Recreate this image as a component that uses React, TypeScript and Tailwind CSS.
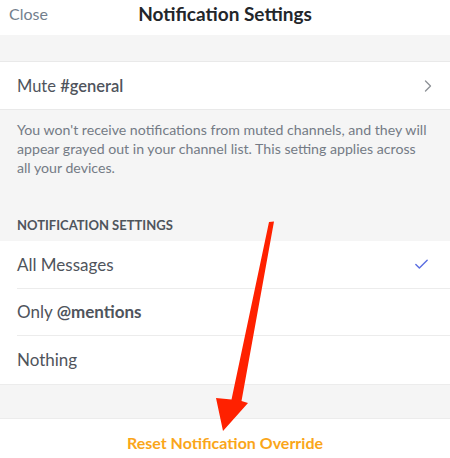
import { ChevronRight, Check } from "lucide-react";

const font = { fontFamily: "Lato, 'Open Sans', sans-serif" };

type Option = { id: string; label: React.ReactNode; selected?: boolean };

const options: Option[] = [
  { id: "all", label: "All Messages", selected: true },
  {
    id: "mentions",
    label: (
      <>
        Only <span className="font-bold">@mentions</span>
      </>
    ),
  },
  { id: "nothing", label: "Nothing" },
];

function OptionRow({ option, last }: { option: Option; last: boolean }) {
  return (
    <div className="pl-[17px]">
      <div
        className={
          "flex h-[47.7px] items-center pr-[20px] " +
          (last ? "" : "border-b border-[#ececec]")
        }
      >
        <span className="flex-1 text-[17px] text-[#4f545c]">{option.label}</span>
        {option.selected && (
          <Check className="h-[17px] w-[17px] text-[#5b6ee1]" strokeWidth={2} />
        )}
      </div>
    </div>
  );
}

// red pointer drawn over the list, aiming at the reset button
function Pointer() {
  return (
    <svg
      className="pointer-events-none absolute left-0 top-0"
      width={450}
      height={458}
      viewBox="0 0 450 458"
    >
      <polygon
        points="269,222 274,221.5 241.5,401 248,403 223,431 216,398 231.5,399.5"
        fill="#ff2100"
        strokeLinejoin="round"
      />
    </svg>
  );
}

export default function App() {
  return (
    <div
      className="relative h-[458px] w-[450px] overflow-hidden bg-[#f5f5f5]"
      style={font}
    >
      <header className="flex h-[35px] items-start bg-white pt-[2px]">
        <div className="relative flex h-[24px] w-full items-center justify-center">
          <span className="absolute left-[9px] text-[16px] text-[#737f8d]">Close</span>
          <span className="text-[19px] font-bold text-[#23262a]">
            Notification Settings
          </span>
        </div>
      </header>

      <div className="h-[27px] border-b border-[#e9e9e9]" />

      <div className="flex h-[48px] items-center border-b border-[#e9e9e9] bg-white pl-[17px] pr-[12px] pt-[1px]">
        <span className="flex-1 text-[16.5px] text-[#4f545c]">
          Mute <span className="font-semibold">#general</span>
        </span>
        <ChevronRight className="h-[20px] w-[20px] text-[#8e9297]" strokeWidth={1.6} />
      </div>

      <div className="h-[131px] px-[17px] pt-[10px]">
        <p className="w-[414px] text-[14.15px] leading-[19px] text-[#747b85]">
          You won't receive notifications from muted channels, and they will
          appear grayed out in your channel list. This setting applies across
          all your devices.
        </p>
        <p className="mt-[39px] text-[13px] font-bold text-[#4f545c]">
          NOTIFICATION SETTINGS
        </p>
      </div>

      <div className="bg-white">
        {options.map((o, i) => (
          <OptionRow key={o.id} option={o} last={i === options.length - 1} />
        ))}
      </div>

      <div className="h-[34px] border-t border-[#ececec]" />

      <div className="flex h-[40px] items-start justify-center border-t border-[#ececec] bg-white pt-[12px]">
        <span className="text-[16px] font-bold text-[#faa61a]">
          Reset Notification Override
        </span>
      </div>

      <Pointer />
    </div>
  );
}
